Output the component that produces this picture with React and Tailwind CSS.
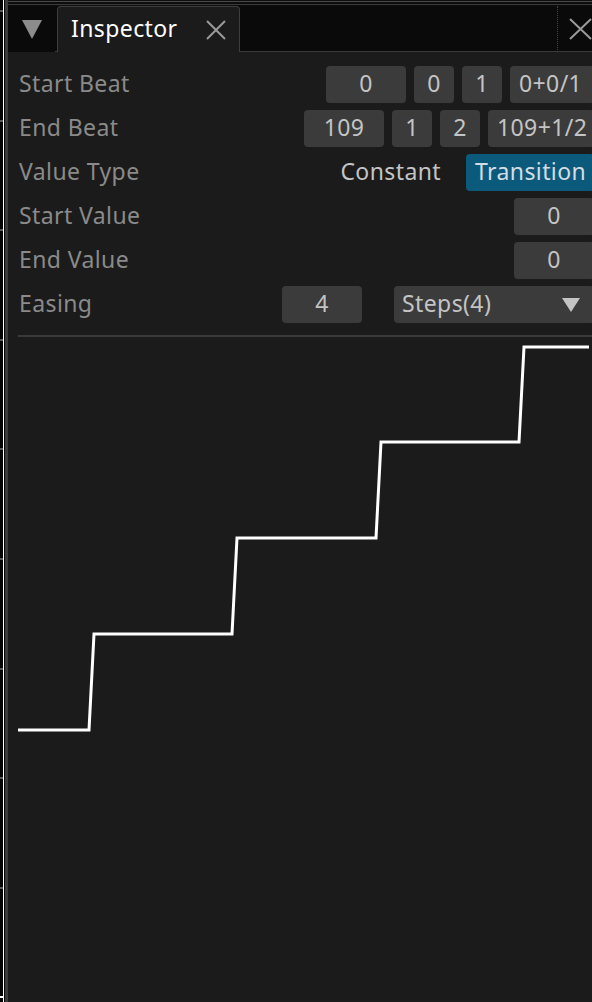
import React from "react";

const font = { fontFamily: '"Noto Sans", "Open Sans", sans-serif' };

function Box({ w, children, left = false, className = "" }) {
  return (
    <div
      className={`h-[37px] shrink-0 rounded-[4px] bg-[#3b3b3b] text-[#c4c4c4] flex items-center pb-[3px] ${left ? "pl-[9px]" : "justify-center"} ${className}`}
      style={{ width: w }}
    >
      {children}
    </div>
  );
}

function Row({ label, children }) {
  return (
    <div className="h-[37px] flex items-center">
      <div className="flex-1 text-[#8a8a8a] whitespace-nowrap pb-[3px]">{label}</div>
      <div className="flex items-center gap-2">{children}</div>
    </div>
  );
}

export default function App() {
  const pts = [
    [10, 393], [81, 393], [86, 297], [224, 297], [229, 201], [368, 201],
    [373, 105], [511, 105], [516, 10], [581, 10],
  ];
  const ticks = [0, 1, 2, 3, 4, 5, 6, 7, 8, 9];
  return (
    <div className="w-[592px] h-[1002px] bg-black overflow-hidden flex text-[23px] tracking-[0.4px] leading-none" style={font}>
      {/* left ruler strip */}
      <div className="w-[5px] h-full relative shrink-0 bg-[#050505]">
        <div className="absolute left-[3px] top-0 w-[1px] h-full bg-white" />
        {ticks.map((i) => (
          <div
            key={i}
            className={`absolute left-0 w-[3px] h-[2px] ${i === 9 ? "bg-white" : "bg-[#5a5a5a]"}`}
            style={{ top: 10 + i * 109.6 }}
          />
        ))}
      </div>
      {/* window */}
      <div className="flex-1 flex flex-col border-l-[3px] border-[#3c3c3c] bg-[#1b1b1b] min-w-0">
        {/* top frame lines */}
        <div className="h-[6px] shrink-0 bg-[#0d0d0d] flex flex-col">
          <div className="h-[1px] mt-[1px] bg-[#4a4a4a]" />
          <div className="h-[1px] mt-[2px] bg-[#3a3a3a]" />
        </div>
        {/* header */}
        <div className="h-[46px] shrink-0 flex bg-[#0a0a0a]">
          <div className="w-[47px] h-full flex items-center justify-center">
            <svg width="20" height="19" viewBox="0 0 20 19">
              <polygon points="0,0 20,0 10,19" fill="#8c8c8c" />
            </svg>
          </div>
          <div className="w-[2px] h-full border-b border-[#3a3a3a]" />
          <div className="w-[183px] h-full bg-[#1b1b1b] border-t border-l border-r border-[#3e3e3e] rounded-t-[4px] flex items-center pl-[13px] pr-[12px]">
            <span className="text-white flex-1 pb-[3px]">Inspector</span>
            <svg width="22" height="22" viewBox="0 0 22 22">
              <path d="M2 2 L20 20 M20 2 L2 20" stroke="#9a9a9a" strokeWidth="2" />
            </svg>
          </div>
          <div className="flex-1 h-full border-b border-[#3a3a3a]" />
          <div className="w-[1px] h-full border-l border-dotted border-[#444] border-b-0" />
          <div className="w-[34px] h-full border-b border-[#3a3a3a] flex items-center pl-[11px]">
            <svg width="24" height="22" viewBox="0 0 24 22" className="shrink-0">
              <path d="M1 1 L22 21 M22 1 L1 21" stroke="#9a9a9a" strokeWidth="2" />
            </svg>
          </div>
        </div>
        {/* body */}
        <div className="flex-1 flex flex-col min-h-0">
          <div className="pt-[14px] pl-[11px] mr-[-2px] flex flex-col gap-[7px]">
            <Row label="Start Beat">
              <Box w={80}>0</Box>
              <Box w={40}>0</Box>
              <Box w={40}>1</Box>
              <Box w={84} left>0+0/1</Box>
            </Row>
            <Row label="End Beat">
              <Box w={80}>109</Box>
              <Box w={40}>1</Box>
              <Box w={40}>2</Box>
              <Box w={106} left>109+1/2</Box>
            </Row>
            <Row label="Value Type">
              <span className="text-[#c4c4c4] mr-[17px] pb-[3px]">Constant</span>
              <div className="h-[37px] w-[128px] rounded-[4px] bg-[#0b5a7c] text-[#d3dde3] flex items-center pl-[9px] pb-[3px]">
                Transition
              </div>
            </Row>
            <Row label="Start Value">
              <Box w={80}>0</Box>
            </Row>
            <Row label="End Value">
              <Box w={80}>0</Box>
            </Row>
            <Row label="Easing">
              <Box w={80} className="mr-[24px]">4</Box>
              <div className="h-[37px] w-[200px] rounded-[4px] bg-[#3b3b3b] text-[#c4c4c4] flex items-center pl-[8px] pr-[14px]">
                <span className="flex-1 pb-[3px]">Steps(4)</span>
                <svg width="18" height="14" viewBox="0 0 18 14">
                  <polygon points="0,0 18,0 9,14" fill="#c4c4c4" />
                </svg>
              </div>
            </Row>
          </div>
          <div className="h-[2px] bg-[#3a3a3a] ml-[10px] mt-[12px] shrink-0" />
          <svg width="584" height="665" viewBox="0 0 584 665" className="block shrink-0">
            <polyline
              points={pts.map((p) => p.join(",")).join(" ")}
              fill="none"
              stroke="#ffffff"
              strokeWidth="3"
              strokeLinejoin="miter"
            />
          </svg>
        </div>
      </div>
    </div>
  );
}
